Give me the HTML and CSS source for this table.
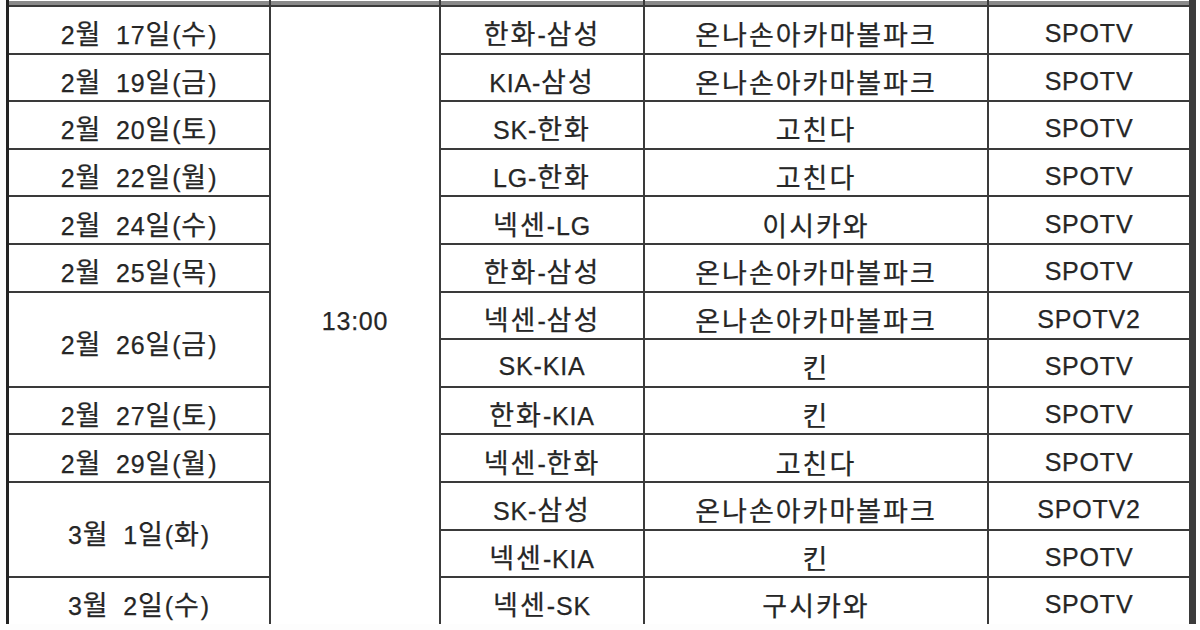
FILE: index.html
```html
<!DOCTYPE html>
<html lang="ko">
<head>
<meta charset="utf-8">
<link rel="stylesheet" href="styles.css">
</head>
<body>
<div class="page">
  <div class="sched">
    <div class="hd"></div><div class="hd"></div><div class="hd"></div><div class="hd"></div><div class="hd"></div>

    <div class="c date"><span>2<span class="k">월</span> 17<span class="k">일</span>(<span class="k">수</span>)</span></div>
    <div class="c time">13:00</div>
    <div class="c"><span><span class="k">한화</span>-<span class="k">삼성</span></span></div><div class="c"><span class="k">온나손아카마볼파크</span></div><div class="c">SPOTV</div>

    <div class="c date"><span>2<span class="k">월</span> 19<span class="k">일</span>(<span class="k">금</span>)</span></div>
    <div class="c"><span>KIA-<span class="k">삼성</span></span></div><div class="c"><span class="k">온나손아카마볼파크</span></div><div class="c">SPOTV</div>

    <div class="c date"><span>2<span class="k">월</span> 20<span class="k">일</span>(<span class="k">토</span>)</span></div>
    <div class="c"><span>SK-<span class="k">한화</span></span></div><div class="c"><span class="k">고친다</span></div><div class="c">SPOTV</div>

    <div class="c date"><span>2<span class="k">월</span> 22<span class="k">일</span>(<span class="k">월</span>)</span></div>
    <div class="c"><span>LG-<span class="k">한화</span></span></div><div class="c"><span class="k">고친다</span></div><div class="c">SPOTV</div>

    <div class="c date"><span>2<span class="k">월</span> 24<span class="k">일</span>(<span class="k">수</span>)</span></div>
    <div class="c"><span><span class="k">넥센</span>-LG</span></div><div class="c"><span class="k">이시카와</span></div><div class="c">SPOTV</div>

    <div class="c date"><span>2<span class="k">월</span> 25<span class="k">일</span>(<span class="k">목</span>)</span></div>
    <div class="c"><span><span class="k">한화</span>-<span class="k">삼성</span></span></div><div class="c"><span class="k">온나손아카마볼파크</span></div><div class="c">SPOTV</div>

    <div class="c date span2"><span>2<span class="k">월</span> 26<span class="k">일</span>(<span class="k">금</span>)</span></div>
    <div class="c"><span><span class="k">넥센</span>-<span class="k">삼성</span></span></div><div class="c"><span class="k">온나손아카마볼파크</span></div><div class="c">SPOTV2</div>
    <div class="c">SK-KIA</div><div class="c"><span class="k">킨</span></div><div class="c">SPOTV</div>

    <div class="c date"><span>2<span class="k">월</span> 27<span class="k">일</span>(<span class="k">토</span>)</span></div>
    <div class="c"><span><span class="k">한화</span>-KIA</span></div><div class="c"><span class="k">킨</span></div><div class="c">SPOTV</div>

    <div class="c date"><span>2<span class="k">월</span> 29<span class="k">일</span>(<span class="k">월</span>)</span></div>
    <div class="c"><span><span class="k">넥센</span>-<span class="k">한화</span></span></div><div class="c"><span class="k">고친다</span></div><div class="c">SPOTV</div>

    <div class="c date span2"><span>3<span class="k">월</span> 1<span class="k">일</span>(<span class="k">화</span>)</span></div>
    <div class="c"><span>SK-<span class="k">삼성</span></span></div><div class="c"><span class="k">온나손아카마볼파크</span></div><div class="c">SPOTV2</div>
    <div class="c"><span><span class="k">넥센</span>-KIA</span></div><div class="c"><span class="k">킨</span></div><div class="c">SPOTV</div>

    <div class="c date"><span>3<span class="k">월</span> 2<span class="k">일</span>(<span class="k">수</span>)</span></div>
    <div class="c"><span><span class="k">넥센</span>-SK</span></div><div class="c"><span class="k">구시카와</span></div><div class="c">SPOTV</div>
  </div>
</div>
</body>
</html>
```

FILE: styles.css
```css
html, body {
  margin: 0;
  padding: 0;
  background: #ffffff;
}
.page {
  width: 1200px;
  height: 630px;
  overflow: hidden;
  background: #fdfdfd;
}
.sched {
  margin-left: 6px;
  width: 1185px;
  display: grid;
  grid-template-columns: 260px 168px 202px 342px 200px;
  grid-template-rows: 5px;
  grid-auto-rows: 45.6px;
  column-gap: 2px;
  row-gap: 2px;
  background: #3a3a3a;
  border-left: 3px solid #222;
  border-right: 2px solid #3a3a3a;
  font-family: "Liberation Sans", "Noto Sans CJK KR", sans-serif;
  font-size: 25px;
  letter-spacing: 0.8px;
  color: #262626;
  -webkit-text-stroke: 0.25px #262626;
}
.hd {
  background: #fff;
  border-bottom: 4px solid #8a8a8a;
  box-sizing: content-box;
  height: 1px;
}
.c {
  background: #fff;
  display: flex;
  align-items: center;
  justify-content: center;
  white-space: nowrap;
  line-height: 1;
  padding-top: 8px;
  box-sizing: border-box;
}
.k {
  font-family: "Noto Sans CJK KR", sans-serif;
  font-size: 27px;
  letter-spacing: 2px;
}
.date {
  grid-column: 1;
  word-spacing: 6px;
}
.time {
  grid-column: 2;
  grid-row: 2 / span 13;
  padding-top: 12px;
}
.span2 {
  grid-row: span 2;
}
```
